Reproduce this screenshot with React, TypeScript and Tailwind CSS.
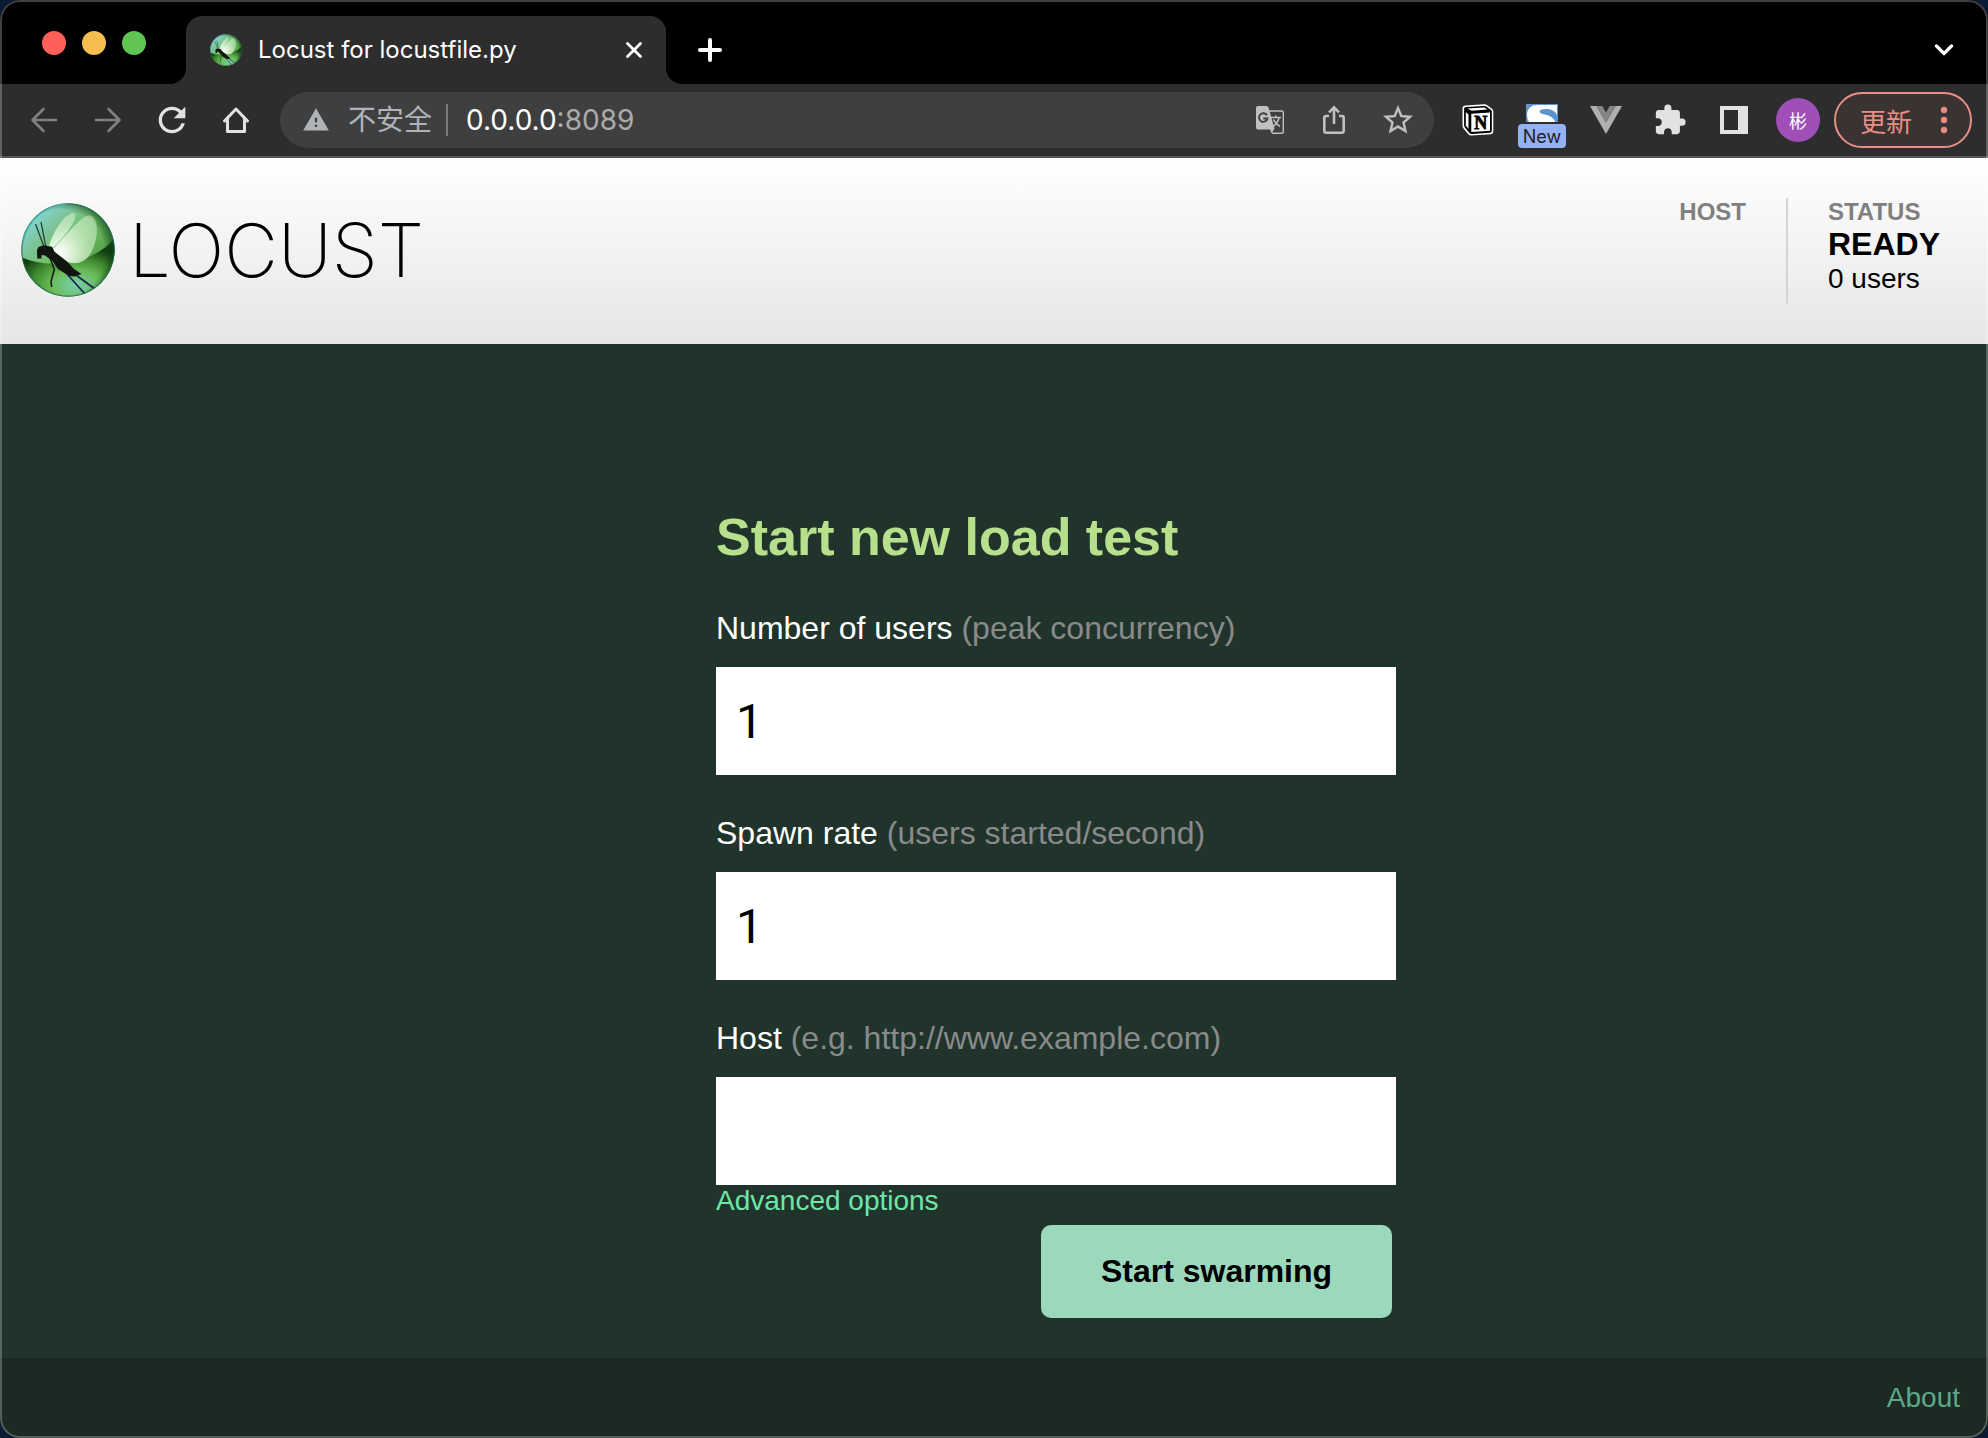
import { useId, useState, type ReactNode } from "react";
import { MdExtension, MdRefresh, MdStarBorder, MdWarning } from "react-icons/md";

function LocustBall({ className }: { className: string }) {
  const id = useId();
  return (
    <svg viewBox="0 0 94 94" className={className} aria-hidden="true">
      <defs>
        <linearGradient id={`${id}sky`} x1="0.1" y1="0.05" x2="0.85" y2="0.85">
          <stop offset="0" stopColor="#86dfee" />
          <stop offset="0.28" stopColor="#7cc49a" />
          <stop offset="0.5" stopColor="#74c069" />
          <stop offset="1" stopColor="#3f8f36" />
        </linearGradient>
        <radialGradient id={`${id}ground`} cx="0.58" cy="0.8" r="0.65">
          <stop offset="0" stopColor="#78cfae" />
          <stop offset="0.4" stopColor="#6abb58" />
          <stop offset="0.7" stopColor="#3f8a2f" />
          <stop offset="1" stopColor="#123f10" />
        </radialGradient>
        <radialGradient id={`${id}rim`} cx="0.42" cy="0.54" r="0.6">
          <stop offset="0.78" stopColor="#0c3d14" stopOpacity="0" />
          <stop offset="1" stopColor="#0c3d14" stopOpacity="0.75" />
        </radialGradient>
        <radialGradient id={`${id}wing`} gradientUnits="userSpaceOnUse" cx="38" cy="50" r="46">
          <stop offset="0" stopColor="#ffffff" />
          <stop offset="0.35" stopColor="#e6f7e0" stopOpacity="0.85" />
          <stop offset="0.7" stopColor="#d3f0cc" stopOpacity="0.65" />
          <stop offset="1" stopColor="#d3f0d4" stopOpacity="0.5" />
        </radialGradient>
        <clipPath id={`${id}clip`}>
          <circle cx="47" cy="47" r="46.5" />
        </clipPath>
      </defs>
      <g clipPath={`url(#${id}clip)`}>
        <rect width="94" height="94" fill={`url(#${id}sky)`} />
        <path d="M0 54Q22 64 50 59Q78 54 94 35V94H0Z" fill={`url(#${id}ground)`} />
        <rect width="94" height="94" fill={`url(#${id}rim)`} />
        <path d="M28 44C30 34 40 14 51 10C56 9 55 15 51 22C46 30 38 39 32 45Z" fill={`url(#${id}wing)`} />
        <path d="M32 46C42 36 58 15 67 12.500C76 12 77 26 75 36C72 50 66 59 56 60C46 61 38 56 32 48Z" fill={`url(#${id}wing)`} />
        <path d="M14.500 21L22.700 43M20 19L24.700 43" stroke="#23402f" strokeWidth="1.300" fill="none" />
        <path d="M16 47L17.500 44L22.500 42.300L31 43.700L33.500 48.700L46 58.500L53 66L60.500 71L54 73.500L48 73L37 66L31 57.500L24 52.500L20.500 52L20.500 55.500L16.200 55.500Z" fill="#10150f" />
        <path d="M29 55L33.300 66.300L30 78.700L30.700 84" stroke="#10150f" strokeWidth="1.500" fill="none" />
        <path d="M46 71L64 91M55 72L74 86" stroke="#1d2547" strokeWidth="1.800" fill="none" />
      </g>
      <circle cx="47" cy="47" r="46.200" fill="none" stroke="#1f6a52" strokeWidth="1.200" strokeOpacity="0.8" />
      <path d="M2 40A46 46 0 0 1 45 1" fill="none" stroke="#4fb3a8" strokeWidth="1.400" />
    </svg>
  );
}

function TabFoot({ className }: { className: string }) {
  return (
    <svg viewBox="0 0 16 16" className={className} aria-hidden="true">
      <path d="M16 0V16H0A16 16 0 0 0 16 0Z" fill="#2d2d2d" />
    </svg>
  );
}

function ToolButton({ label, children }: { label: string; children: ReactNode }) {
  return (
    <button type="button" aria-label={label} className="flex h-14 w-16 shrink-0 items-center justify-center">
      {children}
    </button>
  );
}

function ArrowIcon({ className = "" }: { className?: string }) {
  return (
    <svg viewBox="0 0 28 28" className={`size-7 ${className}`} fill="none" stroke="#808080" strokeWidth="2.6" strokeLinecap="round" strokeLinejoin="round">
      <path d="M26 14H3M13.5 3L2.5 14L13.5 25" />
    </svg>
  );
}

function HomeIcon() {
  return (
    <svg viewBox="0 0 28 28" className="size-7" fill="none" stroke="#e2e2e2" strokeWidth="3" strokeLinecap="round" strokeLinejoin="round">
      <path d="M2.500 15L14 3L25.500 15" />
      <path d="M5.500 13V25.500H22.500V13" />
    </svg>
  );
}

function TranslateIcon() {
  return (
    <svg viewBox="0 0 28 28" className="size-7">
      <path d="M12 5H25.500Q27.300 5 27.300 6.800V25.500Q27.300 27.300 25.500 27.300H16" fill="none" stroke="#c0c0c0" strokeWidth="1.400" />
      <path d="M14.500 11.500H25M19.700 9.500V11.500M23 12Q21.500 17.500 16.500 21M17.500 13.500Q19.500 18 24 20.500" fill="none" stroke="#c0c0c0" strokeWidth="1.500" />
      <path d="M2 0H10.500Q12 0 12.500 1.500L18.500 22.500L15.500 27.500L14 23.500H2Q0 23.500 0 21.500V2Q0 0 2 0Z" fill="#c0c0c0" />
      <path d="M11 9.300A4.300 4.300 0 1 0 11.500 12.500H7.300" fill="none" stroke="#3f3f3f" strokeWidth="1.900" />
    </svg>
  );
}

function ShareIcon() {
  return (
    <svg viewBox="0 0 28 30" className="h-[30px] w-7" fill="none" stroke="#c0c0c0" strokeWidth="2.6">
      <path d="M9 11H6Q4.300 11 4.300 12.700V25.500Q4.300 27.700 6.500 27.700H21.500Q23.700 27.700 23.700 25.500V12.700Q23.700 11 22 11H19" />
      <path d="M14 19V2.500M9 7.300L14 2.300L19 7.300" />
    </svg>
  );
}

function NotionIcon() {
  return (
    <svg viewBox="0 0 32 32" className="size-8">
      <path d="M3.500 1.500L22 0.300Q24 0.200 25.500 1.400L30 4.700Q31.300 5.700 31.300 7.500V27.500Q31.300 30 28.800 30.200L9.500 31.500Q7.500 31.600 6.300 30.200L1.500 24.500Q0.500 23.200 0.500 21.500V4.500Q0.500 1.700 3.500 1.500Z" fill="#fff" />
      <path d="M4 3L22 1.900Q23.500 1.800 24.600 2.700L28.800 5.700Q29.800 6.400 29.800 7.800V27Q29.800 28.600 28.200 28.700L9.800 29.900Q8.300 30 7.400 28.900L2.900 23.400Q2.100 22.400 2.100 21V5Q2.100 3.100 4 3Z" fill="#000" />
      <path d="M5.500 4.500L22.300 3.500L25.500 5.600L9.500 6.700Z" fill="#fff" />
      <path d="M3.800 8L6.500 10.500V25L3.800 21.500Z" fill="#fff" />
      <path d="M9.300 9.700L28 8.500V26.800L9.300 28Z" fill="#fff" />
      <text x="18.700" y="24.500" textAnchor="middle" fontSize="18" fontWeight="700" fontFamily="'Liberation Serif', serif" fill="#000" stroke="#000" strokeWidth="0.8">
        N
      </text>
    </svg>
  );
}

const hdr = "text-2xl leading-7 font-bold text-[#808080]";

function Field({ label, hint, initial }: { label: string; hint: string; initial: string }) {
  const id = useId();
  const [value, setValue] = useState(initial);
  return (
    <div className="mb-10 flex flex-col gap-5 last-of-type:mb-0">
      <label htmlFor={id} className="text-[32px] leading-[37px] text-white">
        {label} <span className="text-[#8a8a8a]">{hint}</span>
      </label>
      <input
        id={id}
        type="text"
        value={value}
        onChange={(e) => setValue(e.target.value)}
        className="h-[108px] w-full bg-white px-5 font-['Roboto',sans-serif] text-5xl text-black outline-none"
      />
    </div>
  );
}

export default function App() {
  return (
    <div className="min-h-screen bg-[#0b1a35] font-['Liberation_Sans',Arial,sans-serif]">
      <div className="relative flex min-h-screen flex-col overflow-hidden rounded-[20px] bg-[#20342c]">
        <div className="flex h-[84px] items-end bg-black pr-4">
          <div className="flex h-[84px] w-[186px] items-center gap-4 pt-0.5 pl-[42px]">
            <button type="button" aria-label="Close window" className="size-6 rounded-full bg-[#fe5f58]" />
            <button type="button" aria-label="Minimize window" className="size-6 rounded-full bg-[#f5bd4f]" />
            <button type="button" aria-label="Zoom window" className="size-6 rounded-full bg-[#61c554]" />
          </div>
          <div className="relative flex h-[68px] w-[480px] items-center gap-4 rounded-t-2xl bg-[#2d2d2d] px-6">
            <TabFoot className="absolute bottom-0 -left-4 size-4" />
            <TabFoot className="absolute -right-4 bottom-0 size-4 -scale-x-100" />
            <LocustBall className="size-8" />
            <span className="flex-1 font-['Inter',sans-serif] text-2xl whitespace-nowrap text-white">Locust for locustfile.py</span>
            <button type="button" aria-label="Close tab">
              <svg viewBox="0 0 16 16" className="size-4" stroke="#fff" strokeWidth="2.800" strokeLinecap="round">
                <path d="M1.500 1.500L14.500 14.500M14.500 1.500L1.500 14.500" />
              </svg>
            </button>
          </div>
          <button type="button" aria-label="New tab" className="ml-5 flex h-[68px] w-12 items-center justify-center">
            <svg viewBox="0 0 24 24" className="size-6" stroke="#fff" strokeWidth="4" strokeLinecap="round">
              <path d="M2 12H22M12 2V22" />
            </svg>
          </button>
          <button type="button" aria-label="Search tabs" className="ml-auto flex h-[68px] w-14 items-center justify-center">
            <svg viewBox="0 0 20 12" className="h-3 w-5" fill="none" stroke="#fff" strokeWidth="3.200" strokeLinecap="round" strokeLinejoin="round">
              <path d="M2.500 2L10 9.500L17.500 2" />
            </svg>
          </button>
        </div>

        <div className="flex h-[74px] items-center border-b-2 border-[#565656] bg-[#2d2d2d] pr-4 pl-3">
          <ToolButton label="Back">
            <ArrowIcon />
          </ToolButton>
          <ToolButton label="Forward">
            <ArrowIcon className="-scale-x-100" />
          </ToolButton>
          <ToolButton label="Reload">
            <MdRefresh className="size-10 text-[#e2e2e2]" />
          </ToolButton>
          <ToolButton label="Home">
            <HomeIcon />
          </ToolButton>
          <div className="mx-3 flex h-14 min-w-0 flex-1 items-center rounded-full bg-[#3f3f3f] pr-1 pl-[22px] font-['Inter','Noto_Sans_CJK_SC',sans-serif] text-[28px] whitespace-nowrap">
            <MdWarning className="size-7 shrink-0 text-[#b0b3b8]" />
            <span className="ml-[18px] text-[#b0b3b8]">不安全</span>
            <span className="mr-4 ml-3.5 h-8 w-0.5 bg-[#7d7d7d]" />
            <span className="flex-1 pl-0.5 text-white">
              0.0.0.0<span className="text-[#ababab]">:8089</span>
            </span>
            <ToolButton label="Translate this page">
              <TranslateIcon />
            </ToolButton>
            <ToolButton label="Share">
              <ShareIcon />
            </ToolButton>
            <ToolButton label="Bookmark">
              <MdStarBorder className="size-9 text-[#c0c0c0]" />
            </ToolButton>
          </div>
          <ToolButton label="Notion">
            <NotionIcon />
          </ToolButton>
          <button type="button" className="flex h-14 w-16 flex-col items-center justify-end gap-0.5">
            <svg viewBox="0 0 32 18" className="h-[18px] w-8" aria-hidden="true">
              <rect width="32" height="18" fill="#5b93cf" />
              <path d="M31 1V11Q29 6 22 5Q15 4.500 13.500 7Q13.500 9.500 19 10.500Q27 12 29.500 18H3Q1 15 1 11Q1 4 7 1.500Q9 1 12 1Z" fill="#fff" />
            </svg>
            <span className="flex h-6 w-12 items-center justify-center rounded bg-[#94b2f3] pt-0.5 font-['Inter',sans-serif] text-lg leading-6 text-[#1f2228]">New</span>
          </button>
          <ToolButton label="Vue devtools">
            <svg viewBox="0 0 32 28" className="h-7 w-8">
              <path d="M0 0H6.500L16 16.500L25.500 0H32L16 28Z" fill="#b0b0b0" />
              <path d="M6.500 0H12.300L16 6.500L19.700 0H25.500L16 16.500Z" fill="#868686" />
            </svg>
          </ToolButton>
          <ToolButton label="Extensions">
            <MdExtension className="size-[34px] text-[#e2e2e2]" />
          </ToolButton>
          <ToolButton label="Side panel">
            <svg viewBox="0 0 28 28" className="size-7">
              <path d="M0 0H28V28H0ZM4 4V24H18V4Z" fill="#e2e2e2" fillRule="evenodd" />
            </svg>
          </ToolButton>
          <ToolButton label="Profile">
            <span className="flex size-11 items-center justify-center rounded-full bg-[#a14fb8] font-['Noto_Sans_CJK_SC',sans-serif] text-lg text-white">彬</span>
          </ToolButton>
          <button
            type="button"
            className="ml-1 flex h-14 w-[138px] shrink-0 items-center justify-between rounded-full border-2 border-[#e68f86] bg-[#3b3232] pr-[22px] pl-6 font-['Noto_Sans_CJK_SC',sans-serif] text-[26px] text-[#e68f86]"
          >
            更新
            <svg viewBox="0 0 8 28" className="h-7 w-2" fill="#e68f86" aria-hidden="true">
              <circle cx="4" cy="4" r="3.200" />
              <circle cx="4" cy="14" r="3.200" />
              <circle cx="4" cy="24" r="3.200" />
            </svg>
          </button>
        </div>

        <header className="flex h-[186px] items-start justify-between bg-gradient-to-b from-white to-[#e6e6e6] pt-10 pr-5 pl-[21px]">
          <a href="#home" className="flex items-center gap-3.5 pt-[5px] text-black">
            <LocustBall className="size-[94px]" />
            <span className="font-['Inter',sans-serif] text-[74px] leading-[94px] font-extralight">LOCUST</span>
          </a>
          <div className="flex h-[106px] pr-7">
            <div className={`pr-10 ${hdr}`}>HOST</div>
            <div className="border-l-2 border-[#d4d4d4] pl-10">
              <div className={hdr}>STATUS</div>
              <div className="text-[32px] leading-9 font-bold text-black">READY</div>
              <div className="text-[28px] leading-[34px] text-black">0 users</div>
            </div>
          </div>
        </header>

        <main className="flex flex-1 justify-center pt-40 pb-10 pl-[124px]">
          <form className="w-[680px]" onSubmit={(e) => e.preventDefault()}>
            <h2 className="mb-10 text-[52px] leading-[66px] font-bold text-[#b8e08c]">Start new load test</h2>
            <div>
              <Field label="Number of users" hint="(peak concurrency)" initial="1" />
              <Field label="Spawn rate" hint="(users started/second)" initial="1" />
              <Field label="Host" hint="(e.g. http://www.example.com)" initial="" />
            </div>
            <a href="#advanced" className="block text-[28px] leading-8 text-[#6ee6a8]">
              Advanced options
            </a>
            <div className="flex justify-end pt-2 pr-1">
              <button type="submit" className="h-[93px] w-[351px] rounded-[10px] bg-[#9cd8bc] pb-0.5 text-[32px] font-bold text-black">
                Start swarming
              </button>
            </div>
          </form>
        </main>

        <footer className="flex h-20 items-center justify-end bg-[#1b2a23] pr-7 text-[28px]">
          <a href="#about" className="text-[#5fa78a]">
            About
          </a>
        </footer>
        <div className="pointer-events-none absolute inset-0 rounded-[20px] border-2 border-white/25" />
      </div>
    </div>
  );
}
